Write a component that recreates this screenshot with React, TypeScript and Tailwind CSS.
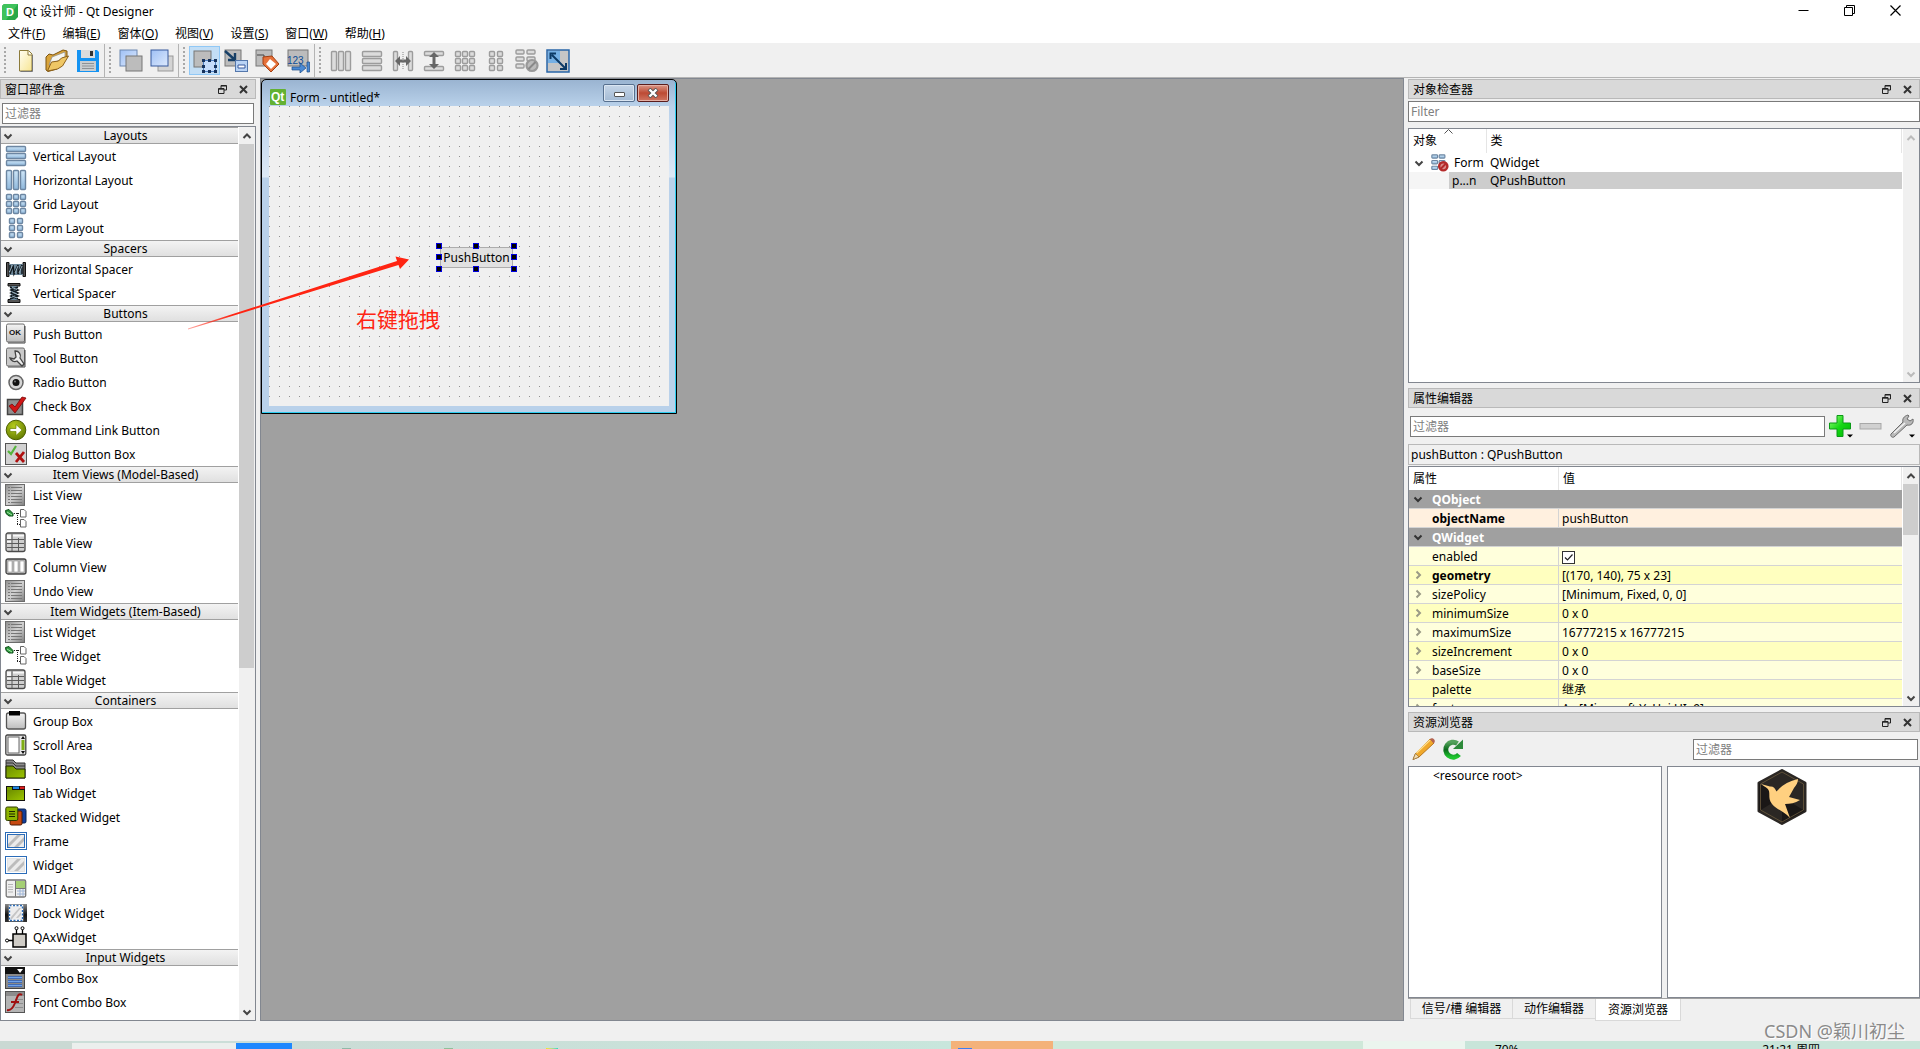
import React from "react";

type IconProps = { children: React.ReactNode; size?: string };

function Icon({ children, size = "h-[22px] w-[22px]" }: IconProps) {
  return (
    <svg viewBox="0 0 22 22" className={`${size} shrink-0`} aria-hidden="true">
      {children}
    </svg>
  );
}

function Defs() {
  return (
    <svg className="absolute h-0 w-0" aria-hidden="true">
      <defs>
        <linearGradient id="blue" x1="0" y1="0" x2="0" y2="1">
          <stop offset="0" stopColor="#cfe6f8" />
          <stop offset="1" stopColor="#8fb8dc" />
        </linearGradient>
        <linearGradient id="silver" x1="0" y1="0" x2="0" y2="1">
          <stop offset="0" stopColor="#f4f4f4" />
          <stop offset="1" stopColor="#bdbdbd" />
        </linearGradient>
        <linearGradient id="lines" x1="0" y1="0" x2="1" y2="1">
          <stop offset="0" stopColor="#8d8d8d" />
          <stop offset="0.5" stopColor="#d2d2d2" />
          <stop offset="1" stopColor="#7d7d7d" />
        </linearGradient>
        <linearGradient id="olive" x1="0" y1="0" x2="1" y2="1">
          <stop offset="0" stopColor="#6b8c00" />
          <stop offset="1" stopColor="#9cc400" />
        </linearGradient>
        <linearGradient id="page" x1="0" y1="0" x2="1" y2="1">
          <stop offset="0" stopColor="#fffef2" />
          <stop offset="1" stopColor="#f7e592" />
        </linearGradient>
        <linearGradient id="sheet" x1="0" y1="0" x2="1" y2="1">
          <stop offset="0" stopColor="#9fc0f5" />
          <stop offset="1" stopColor="#dce9fd" />
        </linearGradient>
        <linearGradient id="dark" x1="0" y1="0" x2="0" y2="1">
          <stop offset="0" stopColor="#8a8a8a" />
          <stop offset="0.6" stopColor="#111" />
          <stop offset="1" stopColor="#333" />
        </linearGradient>
        <radialGradient id="lime" cx="0.4" cy="0.3" r="0.8">
          <stop offset="0" stopColor="#b5cc1c" />
          <stop offset="1" stopColor="#5c7400" />
        </radialGradient>
        <linearGradient id="plus" x1="0" y1="0" x2="1" y2="1">
          <stop offset="0" stopColor="#9dff7c" />
          <stop offset="0.5" stopColor="#15d815" />
          <stop offset="1" stopColor="#00b400" />
        </linearGradient>
        <linearGradient id="reload" x1="0" y1="0" x2="0" y2="1">
          <stop offset="0" stopColor="#55a25c" />
          <stop offset="0.5" stopColor="#0a6b1c" />
          <stop offset="1" stopColor="#1fc62f" />
        </linearGradient>
      </defs>
    </svg>
  );
}

type Cell = [number, number, number, number];

function Cells({ cells, fill, stroke }: { cells: Cell[]; fill: string; stroke: string }) {
  return (
    <>
      {cells.map(([x, y, w, h]) => (
        <rect key={`${x}-${y}`} x={x} y={y} width={w} height={h} rx="1" fill={fill} stroke={stroke} strokeWidth="1.4" />
      ))}
    </>
  );
}

const rowsCells: Cell[] = [[1.5, 1.5, 19, 5], [1.5, 8.5, 19, 5], [1.5, 15.5, 19, 5]];
const colsCells: Cell[] = [[1.5, 1.5, 5, 19], [8.5, 1.5, 5, 19], [15.5, 1.5, 5, 19]];
const gridCells: Cell[] = [1.5, 8.5, 15.5].flatMap((y) => [1.5, 8.5, 15.5].map((x): Cell => [x, y, 5, 5]));
const formCells: Cell[] = [1.5, 8.5, 15.5].flatMap((y) => [4.5, 12.5].map((x): Cell => [x, y, 5, 5]));
const blueInk = { fill: "url(#blue)", stroke: "#6c86a2" };
const greyInk = { fill: "#dcdcdc", stroke: "#9c9c9c" };

const listIcon = (
  <Icon>
    <rect x="0.5" y="0.5" width="19" height="21" fill="url(#lines)" stroke="#6b6b6b" />
    {[3, 6, 9, 12, 15, 18].map((y) => (
      <path key={y} d={`M3 ${y + 0.5}h2M6 ${y + 0.5}h11`} stroke="#777" />
    ))}
  </Icon>
);

const treeIcon = (
  <Icon>
    <path d="M0.5 2.5L4 1.5L8 5.5L8 8L4 8L1 5.5Z" fill="#2f9a3e" stroke="#0b4a16" />
    <path d="M2 4l5 3" stroke="#a5e6a5" />
    <path d="M9 5.5h6M12.5 5v12M12 16.500h4" stroke="#222" strokeDasharray="1 1" />
    <path d="M15.500 1.500h3.500l2 2v5.500h-5.500zM15.500 11.500h3.500l2 2v5.500h-5.500z" fill="#fff" stroke="#666" />
  </Icon>
);

const tableIcon = (
  <Icon>
    <rect x="1" y="1" width="19" height="18.500" rx="2" fill="#cfcfcf" stroke="#4b4b4b" strokeWidth="1.3" />
    <path d="M2 3h4v4h-4zM8 3h11v1.500h-11zM2 9h4v1.500h-4z" fill="#f7f7f7" />
    <path d="M2 7.500h17M2 11.500h17M2 15.500h17M7 2v17M13.500 6v13" stroke="#5b5b5b" fill="none" />
  </Icon>
);

const hatch = (inner: boolean) => (
  <Icon>
    <rect x="0.500" y="2.500" width="21" height="17" fill="#fff" stroke="#2b6cb8" />
    <rect x="2.500" y="4.500" width="17" height="13" fill="#ebebeb" stroke={inner ? "#2b6cb8" : "#e2e2e2"} />
    <path d="M3 14l9-9h4L4 17h-1zM9 17l10-10v4l-6 6z" fill="#bcbcbc" />
  </Icon>
);

const icons: Record<string, React.ReactNode> = {
  "Vertical Layout": <Icon><Cells cells={rowsCells} {...blueInk} /></Icon>,
  "Horizontal Layout": <Icon><Cells cells={colsCells} {...blueInk} /></Icon>,
  "Grid Layout": <Icon><Cells cells={gridCells} {...blueInk} /></Icon>,
  "Form Layout": <Icon><Cells cells={formCells} {...blueInk} /></Icon>,
  "Horizontal Spacer": (
    <Icon>
      <path d="M1.500 4.500h2.500v14h-2.500zM18 4.500h2.500v14h-2.500z" fill="#555" stroke="#111" />
      <path d="M4 6h14v11h-14z" fill="#6c8799" />
      <path d="M5 16l3-9 1 9 4-9 0 9 4-9 0 9M5 7v6" fill="none" stroke="#10181e" strokeWidth="1.500" />
      <path d="M4.500 14l3-7M10 15l3-7M14 15l3-7" stroke="#bcd6e6" strokeWidth="0.800" />
    </Icon>
  ),
  "Vertical Spacer": (
    <Icon>
      <path d="M3 1.500h12v2.500h-12zM3 17.500h12v3h-12z" fill="#555" stroke="#111" />
      <path d="M5 4h8l-1 7 1 7h-8l1-7z" fill="#6c8799" />
      <path d="M5 5l8 3-7 3 7 3-8 3M13 5l-7 3 7 3-7 3 7 3" fill="none" stroke="#10181e" strokeWidth="1.500" />
      <path d="M7 5.500l5 2M7 10l5 2M7 14l5 2" stroke="#bcd6e6" strokeWidth="0.800" />
    </Icon>
  ),
  "Push Button": (
    <Icon>
      <rect x="1.500" y="1" width="18" height="18" rx="1.500" fill="url(#silver)" stroke="#6e6e6e" />
      <path d="M20 3v17h-17" fill="none" stroke="#444" />
      <text x="4" y="12" fontSize="8" fontWeight="bold" fontFamily="Liberation Sans" fill="#111">OK</text>
    </Icon>
  ),
  "Tool Button": (
    <Icon>
      <rect x="1.500" y="1" width="18" height="18" rx="1.500" fill="#c9c9c9" stroke="#6e6e6e" />
      <path d="M20 3v17h-17" fill="none" stroke="#444" />
      <path d="M10 4a5 5 0 0 1 5 7l4 6-2 2-5-5a5 5 0 0 1-7-3l4 1 2-2z" fill="#eee" stroke="#444" strokeWidth="1.300" />
    </Icon>
  ),
  "Radio Button": (
    <Icon>
      <circle cx="11" cy="11.500" r="7" fill="#d6d6d6" stroke="#666" strokeWidth="1.500" />
      <circle cx="11" cy="11.500" r="3.500" fill="#111" />
      <circle cx="10" cy="10.500" r="1" fill="#777" />
    </Icon>
  ),
  "Check Box": (
    <Icon>
      <rect x="2.500" y="4.500" width="15" height="15" fill="#8f8f8f" stroke="#444" strokeWidth="1.500" />
      <path d="M4 11l3-2 3 3 7-10 4 1-11 15z" fill="#d01616" stroke="#7a0808" strokeWidth="0.800" />
    </Icon>
  ),
  "Command Link Button": (
    <Icon>
      <circle cx="11" cy="11" r="9.800" fill="url(#lime)" stroke="#4d6000" />
      <path d="M5 9.500h6v-4l6 5.500-6 5.500v-4h-6z" fill="#fff" stroke="#6c8200" strokeWidth="0.700" />
    </Icon>
  ),
  "Dialog Button Box": (
    <Icon>
      <rect x="0.500" y="0.500" width="21" height="21" fill="#d2d2d2" stroke="#555" />
      <path d="M3 8l3 3 5-8" fill="none" stroke="#55b43c" strokeWidth="2.200" />
      <path d="M11 10l8 9M19 9l-8 10" stroke="#b01010" strokeWidth="2.800" />
    </Icon>
  ),
  "List View": listIcon,
  "Tree View": treeIcon,
  "Table View": tableIcon,
  "Column View": (
    <Icon>
      <rect x="1" y="3" width="20" height="15" rx="2" fill="#b5b5b5" stroke="#444" strokeWidth="1.300" />
      <path d="M3 5h4v11h-4zM9 5h4v11h-4zM15 5h4v11h-4z" fill="#fff" stroke="#999" strokeWidth="0.600" />
    </Icon>
  ),
  "Undo View": listIcon,
  "List Widget": listIcon,
  "Tree Widget": treeIcon,
  "Table Widget": tableIcon,
  "Group Box": (
    <Icon>
      <rect x="1.500" y="3" width="19" height="16" rx="2" fill="url(#silver)" stroke="#555" strokeWidth="1.300" />
      <rect x="4" y="1" width="11" height="4.500" fill="#000" />
    </Icon>
  ),
  "Scroll Area": (
    <Icon>
      <rect x="0.800" y="1" width="20" height="20" rx="1.500" fill="#e5e5e5" stroke="#444" strokeWidth="1.300" />
      <rect x="3" y="3" width="11" height="16" fill="#fff" stroke="#666" />
      <rect x="16.500" y="6" width="3" height="10" fill="#7fae12" />
      <path d="M16 5l2-3 2 3zM16 17l2 3 2-3z" fill="#111" />
    </Icon>
  ),
  "Tool Box": (
    <Icon>
      <path d="M1 2h7l3 3h9v15h-19z" fill="#8d8d8d" stroke="#333" />
      <path d="M1 5h7l3 3h9" fill="none" stroke="#333" />
      <path d="M1 8h7l3 3h9v9h-19z" fill="url(#olive)" stroke="#1d2600" />
    </Icon>
  ),
  "Tab Widget": (
    <Icon>
      <rect x="1" y="4" width="19" height="15" fill="#111" />
      <rect x="2" y="5" width="5" height="3" fill="#7ca200" />
      <rect x="8" y="4.500" width="6" height="2.500" fill="#1e83e0" />
      <rect x="15" y="4.500" width="4.500" height="2.500" fill="#d81c1c" />
      <rect x="2" y="8" width="17" height="10" fill="url(#olive)" />
    </Icon>
  ),
  "Stacked Widget": (
    <Icon>
      <rect x="9" y="3" width="12" height="14" rx="1.500" fill="#123f9c" stroke="#08204f" />
      <rect x="5" y="5" width="12" height="14" rx="1.500" fill="#c64a12" stroke="#4f1b04" />
      <rect x="0.800" y="1" width="12" height="13.500" rx="1.500" fill="#8db300" stroke="#2c3a00" />
      <path d="M4 5.500h6M4 8h6M4 10.500h6" stroke="#1d2600" />
    </Icon>
  ),
  Frame: hatch(true),
  Widget: hatch(false),
  "MDI Area": (
    <Icon>
      <rect x="1.200" y="2" width="19.500" height="17" rx="1.500" fill="#efefef" stroke="#777" strokeWidth="1.300" />
      <rect x="11" y="3" width="9" height="7" fill="#a5cf74" />
      <path d="M3 6.500h5M3 9h5M3 11.500h5M3 14h5" stroke="#b5b5b5" />
      <path d="M10.500 2.500v16M10.500 10.500h10" stroke="#777" />
      <path d="M12 13h8M12 16h8M15 11v7M18 11v7" stroke="#9db4d6" />
    </Icon>
  ),
  "Dock Widget": (
    <Icon>
      <rect x="0" y="2" width="22" height="18" fill="url(#dark)" />
      <rect x="4.500" y="3.500" width="13" height="15" fill="#ededed" />
      <rect x="4.500" y="3.500" width="13" height="15" fill="none" stroke="#fff" strokeWidth="1.400" />
      <rect x="4.500" y="3.500" width="13" height="15" fill="none" stroke="#2b6cb8" strokeWidth="1.400" strokeDasharray="2 1.500" />
      <path d="M6 15l8-9h2l-9 11h-1zM11 16l5-6v3l-3 3z" fill="#c5c5c5" />
    </Icon>
  ),
  QAxWidget: (
    <Icon>
      <rect x="8" y="8" width="13" height="13" fill="#cfccc6" stroke="#000" strokeWidth="1.500" />
      <path d="M11.500 8V3M17.500 8V3M8 14.500H3" stroke="#000" strokeWidth="1.300" />
      <circle cx="11.500" cy="2.200" r="1.500" fill="#fff" stroke="#000" />
      <circle cx="17.500" cy="2.200" r="1.500" fill="#fff" stroke="#000" />
      <circle cx="2" cy="14.500" r="1.500" fill="#fff" stroke="#000" />
    </Icon>
  ),
  "Combo Box": (
    <Icon>
      <rect x="0.500" y="0.500" width="19" height="21" fill="#8a8a8a" stroke="#444" />
      <rect x="0" y="0" width="20" height="7" fill="#111" />
      <path d="M12 2h6l-3 4z" fill="#fff" />
      <path d="M3 10.500h14M3 14.500h14M3 18.500h14" stroke="#36599c" strokeWidth="3" />
      <path d="M3 10.500h14M3 14.500h14M3 18.500h14" stroke="#6fa3ea" strokeWidth="1.600" />
    </Icon>
  ),
  "Font Combo Box": (
    <Icon>
      <rect x="0.500" y="0.500" width="19" height="21" fill="#b4b4b4" stroke="#555" />
      <rect x="1" y="1" width="18" height="4" fill="#8c8c8c" />
      <path d="M10 8.500h8M10 12.500h8M10 16.500h8" stroke="#8d8d8d" />
      <path d="M17 4C13 1 12 7 10 12S6 20 2 19M6 11h8" fill="none" stroke="#a01010" strokeWidth="2" />
    </Icon>
  ),
};

const groups: { title: string; items: string[] }[] = [
  { title: "Layouts", items: ["Vertical Layout", "Horizontal Layout", "Grid Layout", "Form Layout"] },
  { title: "Spacers", items: ["Horizontal Spacer", "Vertical Spacer"] },
  { title: "Buttons", items: ["Push Button", "Tool Button", "Radio Button", "Check Box", "Command Link Button", "Dialog Button Box"] },
  { title: "Item Views (Model-Based)", items: ["List View", "Tree View", "Table View", "Column View", "Undo View"] },
  { title: "Item Widgets (Item-Based)", items: ["List Widget", "Tree Widget", "Table Widget"] },
  {
    title: "Containers",
    items: ["Group Box", "Scroll Area", "Tool Box", "Tab Widget", "Stacked Widget", "Frame", "Widget", "MDI Area", "Dock Widget", "QAxWidget"],
  },
  { title: "Input Widgets", items: ["Combo Box", "Font Combo Box"] },
];

function Chevron({ dir, color = "#444" }: { dir: "up" | "down" | "right"; color?: string }) {
  const d = dir === "up" ? "M1.500 7l3.500-3.500L8.500 7" : dir === "down" ? "M1.500 3.500L5 7l3.500-3.500" : "M3.500 1.500L7 5l-3.500 3.500";
  return (
    <svg viewBox="0 0 10 10" className="h-[10px] w-[10px] shrink-0" aria-hidden="true">
      <path d={d} fill="none" stroke={color} strokeWidth="2" />
    </svg>
  );
}

function ScrollBar({ thumb, color }: { thumb?: string; color?: string }) {
  return (
    <div className="ml-px flex w-[16px] shrink-0 flex-col bg-[#f0f0f0]">
      <button aria-label="Scroll up" className="flex h-[17px] shrink-0 items-center justify-center"><Chevron dir="up" color={color} /></button>
      <div className="min-h-0 flex-1">{thumb && <div className={`${thumb} mr-px bg-[#cdcdcd]`} />}</div>
      <button aria-label="Scroll down" className="flex h-[17px] shrink-0 items-center justify-center"><Chevron dir="down" color={color} /></button>
    </div>
  );
}

function DockTitle({ title }: { title: string }) {
  return (
    <div className="flex h-[20px] shrink-0 items-center border border-[#b9b9b9] bg-[#d9d9d9] pt-px pr-[7px] pl-[4px]">
      <h2 className="flex-1 leading-[17px]">{title}</h2>
      <button aria-label={`浮动 ${title}`} className="mr-[12px]">
        <svg viewBox="0 0 9 9" className="h-[9px] w-[9px]" fill="none" stroke="#222">
          <path d="M3 3.500V0.500h5.500v4.500H6M3 1h5.500M0.500 3.500h5.500v5h-5.500zM0.500 4.200h5.500" />
        </svg>
      </button>
      <button aria-label={`关闭 ${title}`}>
        <svg viewBox="0 0 9 9" className="h-[9px] w-[9px]" stroke="#333" strokeWidth="2">
          <path d="M1 1l7 7M8 1l-7 7" />
        </svg>
      </button>
    </div>
  );
}

function Filter({ label, hint, className }: { label: string; hint: string; className: string }) {
  return (
    <input
      type="text"
      aria-label={label}
      placeholder={hint}
      className={`${className} h-[21px] min-w-0 border border-[#7a7a7a] bg-white px-[2px] placeholder:text-[#808080]`}
    />
  );
}

function ToolGroup({ children, last }: { children: React.ReactNode; last?: boolean }) {
  return (
    <div className={`flex h-full items-center pr-px ${last ? "" : "border-r border-[#b4b4b4]"}`}>
      <div className="ml-[4px] h-[27px] w-[6px] bg-[radial-gradient(circle_at_1px_1px,#a8a8a8_1px,transparent_1.500px)] bg-[length:7px_4px]" />
      {children}
    </div>
  );
}

function Tool({ label, active, children }: { label: string; active?: boolean; children: React.ReactNode }) {
  return (
    <button
      aria-label={label}
      aria-pressed={active}
      className={`flex h-[29px] w-[31px] items-center justify-center border ${active ? "border-[#90c8f6] bg-[#c3def5]" : "border-transparent"}`}
    >
      <svg viewBox="0 0 24 24" className="h-[24px] w-[24px]">{children}</svg>
    </button>
  );
}

const shade = { fill: "#bcbcbc", stroke: "#777" };

function ToolBar() {
  return (
    <div role="toolbar" aria-label="工具" className="flex h-[34px] shrink-0 items-center border-b border-[#b4b4b4] bg-[#f0f0f0]">
      <ToolGroup>
        <Tool label="新建">
          <path d="M5.500 1.500h9l3.500 3.500v16l-1 1h-11.500z" fill="url(#page)" stroke="#8c7b3a" />
          <path d="M14 2v4h4" fill="#fff" stroke="#8c7b3a" />
          <path d="M18.500 6v16.500h-12" fill="none" stroke="#777" />
        </Tool>
        <Tool label="打开">
          <path d="M1 21V8l3-3 4 1L18 1l4 1v6L12 20l-9 2.500z" fill="#d9a43a" stroke="#7d5410" />
          <path d="M4 16l3-8L20 3v5L9 14z" fill="#f5f5f0" stroke="#888" strokeWidth="0.700" />
          <path d="M2.500 22l4-9 7-1 3-3 7-2-6 10-5 3z" fill="#efc765" stroke="#8d611a" />
        </Tool>
        <Tool label="保存">
          <path d="M1 1h20l2 2v20h-22z" fill="#1493f2" />
          <path d="M5 1h14v8h-14z" fill="#dcdcdc" />
          <path d="M14 2h3v5h-3z" fill="#333" />
          <path d="M4 12h16v10h-16z" fill="#c9cdd0" />
          <path d="M6 14.500h12M6 17h12M6 19.500h12" stroke="#8d9296" />
        </Tool>
      </ToolGroup>
      <ToolGroup>
        <Tool label="置于底层">
          <rect x="1" y="1" width="17" height="16" fill="url(#sheet)" stroke="#6c87b0" />
          <rect x="7" y="7" width="16" height="15" {...shade} />
        </Tool>
        <Tool label="置于顶层">
          <rect x="8" y="7" width="15" height="15" fill="#d4d4d4" stroke="#999" />
          <rect x="1" y="1" width="17" height="16" fill="url(#sheet)" stroke="#36599c" />
        </Tool>
      </ToolGroup>
      <ToolGroup>
        <Tool label="编辑控件" active>
          <rect x="1" y="2" width="17" height="16" {...shade} />
          <rect x="10.500" y="11.500" width="12" height="11" fill="#c5dcfa" stroke="#4f7fc0" />
          <path d="M9 10h3v3h-3zM15 10h3v3h-3zM21 10h3v3h-3zM9 16h3v3h-3zM21 16h3v3h-3zM9 21h3v3h-3zM15 21h3v3h-3zM21 21h3v3h-3z" fill="#16325c" />
        </Tool>
        <Tool label="编辑信号/槽">
          <rect x="1" y="1" width="16" height="16" {...shade} />
          <path d="M1 2l9 8M4 11h7V4" fill="none" stroke="#173f66" strokeWidth="2.400" />
          <rect x="11.500" y="11.500" width="12" height="11" fill="#b9d3f5" stroke="#5477ab" />
          <path d="M14 16h7v3h-7z" fill="#fff" stroke="#36599c" />
        </Tool>
        <Tool label="编辑伙伴">
          <rect x="1" y="1" width="16" height="16" {...shade} />
          <path d="M2 6h7v4" fill="none" stroke="#444" />
          <path d="M8 8l9-1 7 8-8 8-8-8z" fill="#e5713a" stroke="#a33f12" />
          <path d="M15 10l6 5-5 5-5-5z" fill="#fff" />
        </Tool>
        <Tool label="编辑 Tab 顺序">
          <rect x="2" y="1" width="20" height="16" {...shade} />
          <text x="1" y="15" fontSize="10" fontFamily="Liberation Sans" fill="#0c4c96">123</text>
          <path d="M6 18h8v-4l6 5-6 5v-3H6zM21 13h2.500v10H21z" fill="#4a8ad4" stroke="#1b4a86" strokeWidth="0.700" />
        </Tool>
      </ToolGroup>
      <ToolGroup last>
        <Tool label="水平布局"><g transform="translate(1 1)"><Cells cells={colsCells} {...greyInk} /></g></Tool>
        <Tool label="垂直布局"><g transform="translate(1 1)"><Cells cells={rowsCells} {...greyInk} /></g></Tool>
        <Tool label="使用分裂器水平布局">
          <Cells cells={[[2.5, 2.5, 4, 19], [17.5, 2.5, 4, 19]]} {...greyInk} />
          <path d="M4 12l5-5v3.500h6V7l5 5-5 5v-3.500H9V17z" fill="#666" />
          <path d="M12 3v18" stroke="#888" strokeDasharray="1 1" />
        </Tool>
        <Tool label="使用分裂器垂直布局">
          <Cells cells={[[2.5, 2.5, 19, 4], [2.5, 17.5, 19, 4]]} {...greyInk} />
          <path d="M12 3l5 5h-3.500v7H17l-5 5-5-5h3.500V8H7z" fill="#666" />
        </Tool>
        <Tool label="栅格布局"><g transform="translate(1 1)"><Cells cells={gridCells} {...greyInk} /></g></Tool>
        <Tool label="在窗体布局中布局"><g transform="translate(1 1)"><Cells cells={formCells} {...greyInk} /></g></Tool>
        <Tool label="打破布局">
          <Cells cells={[[1, 1, 8, 4], [12, 1, 8, 4], [1, 8, 8, 4], [12, 8, 8, 4], [1, 15, 8, 4]]} {...greyInk} />
          <circle cx="17" cy="16.500" r="5.500" fill="#bbb" stroke="#999" strokeWidth="2.200" />
          <path d="M13.500 20l7-7" stroke="#888" strokeWidth="2" />
        </Tool>
        <Tool label="调整大小">
          <rect x="1" y="1" width="22" height="22" fill="#c6c6c6" stroke="#2866a8" strokeWidth="1.500" />
          <path d="M2 2h12v12h-12z" fill="#76b0e4" />
          <path d="M6 6l13 13M4.500 10V4.500H10M20 14v6h-6" fill="none" stroke="#0d3a66" strokeWidth="2" />
        </Tool>
      </ToolGroup>
    </div>
  );
}

const menus: [string, string][] = [["文件", "F"], ["编辑", "E"], ["窗体", "O"], ["视图", "V"], ["设置", "S"], ["窗口", "W"], ["帮助", "H"]];

function WidgetBox() {
  return (
    <aside className="flex w-[256px] shrink-0 flex-col pt-px">
      <DockTitle title="窗口部件盒" />
      <Filter label="过滤窗口部件" hint="过滤器" className="mx-[2px] mt-[4px] shrink-0" />
      <div className="mt-[2px] flex min-h-0 flex-1 border border-[#828790] bg-white">
        <div className="min-w-0 flex-1 overflow-hidden">
          {groups.map((g) => (
            <section key={g.title}>
              <h3 className="flex h-[17px] items-center border-y border-[#a0a0a0] bg-linear-to-b from-[#f3f3f3] to-[#e0e0e0] pl-[2px]">
                <Chevron dir="down" />
                <span className="flex-1 text-center leading-[15px]">{g.title}</span>
              </h3>
              <ul>
                {g.items.map((name) => (
                  <li key={name} className="flex h-[24px] items-center gap-[6px] pl-[4px]">
                    {icons[name]}
                    <span className="pt-[2px]">{name}</span>
                  </li>
                ))}
              </ul>
            </section>
          ))}
        </div>
        <ScrollBar thumb="h-[61%]" />
      </div>
    </aside>
  );
}

const handles = [
  "-left-[3px] -top-[3px]", "left-[34px] -top-[3px]", "-right-[3px] -top-[3px]",
  "-left-[3px] top-[8px]", "-right-[3px] top-[8px]",
  "-left-[3px] -bottom-[3px]", "left-[34px] -bottom-[3px]", "-right-[3px] -bottom-[3px]",
];

function Workspace() {
  return (
    <main className="relative min-w-0 flex-1 overflow-hidden border border-[#828790] bg-[#a0a0a0]">
      <div className="absolute top-0 left-0 rounded-t-[5px] border border-black bg-[linear-gradient(#9ab4d1,#b9d1ea_26px,#c4d8ef_50px,#dde9f6_97px,#b9d1ea_98px)] px-[7px] pb-[7px] shadow-[inset_-1px_-1px_0_#2ccdf0]">
        <div className="flex h-[26px] items-center">
          <svg viewBox="0 0 16 16" className="mt-[8px] ml-px h-[16px] w-[16px]" aria-hidden="true">
            <rect width="16" height="16" rx="1" fill="#63b132" />
            <text x="1" y="12" fontSize="12" fontWeight="bold" fontFamily="Liberation Sans" fill="#fff">Qt</text>
          </svg>
          <span className="mt-[10px] ml-[4px] flex-1">Form - untitled*</span>
          <button aria-label="最小化" className="mr-[2px] flex h-[18px] w-[32px] items-center justify-center rounded-[2px] border border-[#57708f] bg-linear-to-b from-[#c6d6e8] to-[#a3bad4] shadow-[inset_0_0_0_1px_#dbe6f2]">
            <span className="mt-[3px] h-[5px] w-[11px] rounded-[1px] border border-[#555] bg-white" />
          </button>
          <button aria-label="关闭" className="flex h-[18px] w-[32px] items-center justify-center rounded-[2px] border border-[#5b1d1d] bg-linear-to-b from-[#d99688] via-[#bd4a34] to-[#cf7561] shadow-[inset_0_0_0_1px_#e5b0a5]">
            <svg viewBox="0 0 12 10" className="h-[10px] w-[12px]">
              <path d="M2 1l8 8M10 1L2 9" stroke="#555" strokeWidth="4" />
              <path d="M2.500 1.500l7 7M9.500 1.500l-7 7" stroke="#fff" strokeWidth="2.400" />
            </svg>
          </button>
        </div>
        <div className="relative h-[300px] w-[400px] bg-[#f0f0f0] bg-[linear-gradient(90deg,#f0f0f0_0_9px,transparent_9px),linear-gradient(#f0f0f0_0_9px,#909090_9px)] bg-[length:10px_10px] bg-[position:1px_1px]">
          <div className="absolute top-[140px] left-[170px] h-[23px] w-[75px] p-px">
            <button className="h-full w-full border border-[#adadad] bg-[#e1e1e1] leading-[19px]">PushButton</button>
            {handles.map((pos) => (
              <span key={pos} className={`absolute h-[6px] w-[6px] border border-[#0000e0] bg-black ${pos}`} />
            ))}
          </div>
        </div>
      </div>
    </main>
  );
}

function Annotation() {
  return (
    <div className="pointer-events-none absolute top-[250px] left-[186px]">
      <svg viewBox="0 0 226 82" className="h-[82px] w-[226px]" aria-hidden="true">
        <defs>
          <linearGradient id="tail" x1="0" y1="0" x2="1" y2="0">
            <stop offset="0" stopColor="#ff2412" stopOpacity="0.400" />
            <stop offset="0.200" stopColor="#ff2412" />
          </linearGradient>
        </defs>
        <path d="M2 78.500L211 11L209.500 6.500L223 9.500L214 19L212.500 15L2 79.500Z" fill="url(#tail)" />
      </svg>
      <p className="-mt-[28px] ml-[170px] text-[21px] leading-[30px] whitespace-nowrap text-[#ff2412]">右键拖拽</p>
    </div>
  );
}

function ObjectInspector() {
  return (
    <section className="flex min-h-0 flex-col">
      <DockTitle title="对象检查器" />
      <Filter label="过滤对象" hint="Filter" className="mt-[2px] shrink-0" />
      <div className="mt-[6px] flex min-h-0 flex-1 border border-[#828790] bg-white">
        <div className="min-w-0 flex-1">
          <table className="w-full table-fixed border-collapse text-left">
            <colgroup><col className="w-[77px]" /><col /></colgroup>
            <thead>
              <tr className="h-[24px]">
                <th className="relative border-r border-[#e5e5e5] pl-[4px] font-normal">
                  对象
                  <svg viewBox="0 0 9 5" className="absolute top-0 left-[35px] h-[5px] w-[9px]"><path d="M0.500 4.500l4-4 4 4" fill="none" stroke="#555" /></svg>
                </th>
                <th className="border-r border-[#e5e5e5] pl-[4px] font-normal">类</th>
              </tr>
            </thead>
            <tbody>
              <tr className="h-[19px]">
                <td className="p-0">
                  <div className="flex h-[19px] items-center pl-[5px]">
                    <Chevron dir="down" />
                    <span className="ml-[7px]">
                      <Icon size="h-[18px] w-[18px]">
                        <Cells cells={[[1, 1, 7, 4], [10, 1, 7, 4], [1, 8, 7, 4], [10, 8, 7, 4], [1, 15, 7, 4]]} {...blueInk} />
                        <circle cx="15" cy="15" r="5" fill="#d98c8c" stroke="#b42a2a" strokeWidth="3" />
                        <path d="M12 18l6-6" stroke="#b42a2a" strokeWidth="2.400" />
                      </Icon>
                    </span>
                    <span className="ml-[5px]">Form</span>
                  </div>
                </td>
                <td className="p-0 pl-[4px]">QWidget</td>
              </tr>
              <tr className="h-[17px] leading-[17px]">
                <td className="bg-[linear-gradient(90deg,#f5f5f5_40px,#cdcdcd_40px)] p-0 pl-[43px]">p...n</td>
                <td className="bg-[#cdcdcd] p-0 pl-[4px]">QPushButton</td>
              </tr>
            </tbody>
          </table>
        </div>
        <ScrollBar color="#bbb" />
      </div>
    </section>
  );
}

type Prop = { name: string; value?: string; bold?: boolean; open?: boolean; kind: string; check?: boolean; arrow?: boolean };

const groupRow = "bg-[#a0a0a0] text-white";
const light = "bg-[#ffffdc]";
const deep = "bg-[#ffffbf]";
const props: Prop[] = [
  { name: "QObject", bold: true, open: true, kind: groupRow },
  { name: "objectName", value: "pushButton", bold: true, kind: "bg-[#fff0df]" },
  { name: "QWidget", bold: true, open: true, kind: groupRow },
  { name: "enabled", check: true, kind: light },
  { name: "geometry", value: "[(170, 140), 75 x 23]", bold: true, arrow: true, kind: deep },
  { name: "sizePolicy", value: "[Minimum, Fixed, 0, 0]", arrow: true, kind: light },
  { name: "minimumSize", value: "0 x 0", arrow: true, kind: deep },
  { name: "maximumSize", value: "16777215 x 16777215", arrow: true, kind: light },
  { name: "sizeIncrement", value: "0 x 0", arrow: true, kind: deep },
  { name: "baseSize", value: "0 x 0", arrow: true, kind: light },
  { name: "palette", value: "继承", kind: deep },
  { name: "font", value: "A   [Microsoft YaHei UI, 9]", arrow: true, kind: light },
];

function PropertyEditor() {
  return (
    <section className="flex min-h-0 flex-col">
      <DockTitle title="属性编辑器" />
      <div className="flex h-[36px] shrink-0 items-center pl-[2px]">
        <Filter label="过滤属性" hint="过滤器" className="flex-1" />
        <button aria-label="添加动态属性" className="ml-[3px] w-[25px]">
          <svg viewBox="0 0 25 24" className="h-[24px] w-[25px]">
            <path d="M9 1.500h6V9h7.500v6H15v7.500H9V15H1.500V9H9z" fill="url(#plus)" stroke="#0a9a16" />
            <path d="M19 20.500h6l-3 3z" fill="#000" />
          </svg>
        </button>
        <button aria-label="删除动态属性" className="ml-[6px] w-[24px]">
          <svg viewBox="0 0 24 24" className="h-[24px] w-[24px]"><rect x="1" y="9.500" width="21" height="5.500" fill="#d0d0d0" stroke="#a8a8a8" /></svg>
        </button>
        <button aria-label="配置属性编辑器" className="mr-[5px] ml-[7px] w-[25px]">
          <svg viewBox="0 0 25 24" className="h-[24px] w-[25px]">
            <path d="M1 20L13 8c-1-3 1-6 5-7l1 1-2 3 3 2 3-2c1 4-2 7-6 6L4 23c-2 1-4-1-3-3z" fill="#b9b9b9" stroke="#6d6d6d" />
            <path d="M4 19l11-10" stroke="#f4f4f4" strokeWidth="1.500" />
            <path d="M19 20.500h6l-3 3z" fill="#000" />
          </svg>
        </button>
      </div>
      <p className="flex h-[21px] shrink-0 items-center border border-[#b9b9b9] px-[2px]">pushButton : QPushButton</p>
      <div className="mt-px flex min-h-0 flex-1 border border-[#828790] bg-white">
        <div className="min-w-0 flex-1 overflow-hidden">
          <table className="w-full table-fixed border-separate border-spacing-0 text-left">
            <colgroup><col className="w-[150px]" /><col /></colgroup>
            <thead>
              <tr className="h-[23px]">
                <th className="border-r border-[#e5e5e5] p-0 pt-px pl-[4px] font-normal">属性</th>
                <th className="border-r border-[#e5e5e5] p-0 pt-px pl-[4px] font-normal">值</th>
              </tr>
            </thead>
            <tbody>
              {props.map((p) => (
                <tr key={p.name} className={`h-[19px] ${p.kind}`}>
                  <th scope="row" className={`border-b border-[#d4d4d4] p-0 ${p.bold ? "font-bold" : "font-normal"} ${p.open ? "" : "border-r"}`} colSpan={p.open ? 2 : 1}>
                    <div className="flex h-[18px] items-center pl-[4px]">
                      <span className="w-[19px]">
                        {p.open && <Chevron dir="down" color="#333" />}
                        {p.arrow && <Chevron dir="right" color="#9b9b86" />}
                      </span>
                      <span className="pt-[2px]">{p.name}</span>
                    </div>
                  </th>
                  {!p.open && (
                    <td className="border-b border-[#d4d4d4] p-0 pl-[3px]">
                      <div className="flex h-[18px] items-center pt-[2px] whitespace-pre">
                        {p.check && (
                          <span className="relative h-[13px] w-[13px]">
                            <input type="checkbox" defaultChecked aria-label={p.name} className="block h-[13px] w-[13px] appearance-none border border-[#333] bg-white" />
                            <svg viewBox="0 0 13 13" className="pointer-events-none absolute inset-0"><path d="M3 6.500l2.500 2.500L10.500 3.500" fill="none" stroke="#222" strokeWidth="1.200" /></svg>
                          </span>
                        )}
                        {p.value}
                      </div>
                    </td>
                  )}
                </tr>
              ))}
            </tbody>
          </table>
        </div>
        <ScrollBar thumb="h-[51px]" />
      </div>
    </section>
  );
}

function ResourceBrowser() {
  return (
    <section className="flex min-h-0 flex-col">
      <DockTitle title="资源浏览器" />
      <div className="flex h-[34px] shrink-0 items-center pr-[2px] pl-[4px]">
        <button aria-label="编辑资源">
          <svg viewBox="0 0 24 24" className="h-[24px] w-[24px]">
            <path d="M1 22.500l2.500-6L18 2l4 4L7 20z" fill="#f0a92c" stroke="#b8741a" />
            <path d="M4.500 16L18 3" stroke="#ffdf8d" strokeWidth="1.500" />
            <path d="M1 22.500l2.500-6 3.500 3.500z" fill="#f3dcb0" stroke="#94733c" strokeWidth="0.700" />
            <path d="M18 2c1.500-2 6 0 4.500 3.500l-1 1z" fill="#b46452" />
          </svg>
        </button>
        <button aria-label="重新加载" className="ml-[5px]">
          <svg viewBox="0 0 24 24" className="h-[24px] w-[24px]">
            <path d="M18 17.500A7.500 7.500 0 1 1 16.500 6.500" fill="none" stroke="url(#reload)" strokeWidth="5" />
            <path d="M22 2.500v9.500h-10z" fill="#2d8a3a" />
          </svg>
        </button>
        <div className="flex-1" />
        <Filter label="过滤资源" hint="过滤器" className="w-[225px]" />
      </div>
      <div className="grid min-h-0 flex-1 grid-cols-2 gap-[5px]">
        <div className="border border-[#828790] bg-white pt-px pl-[24px]">&lt;resource root&gt;</div>
        <div className="border border-[#828790] bg-white pt-[2px] pl-[89px]">
          <svg viewBox="0 0 50 56" className="h-[56px] w-[50px]" role="img" aria-label="Bird">
            <path d="M25 1.500L48 14v28L25 54.500 2 42V14z" fill="#2b2724" stroke="#2b2724" strokeWidth="3" strokeLinejoin="round" />
            <path d="M25 28L2 14v28zM25 28l23 14-23 12z" fill="#1a1716" />
            <path d="M25 3L46.500 15v26L25 53 3.500 41V15z" fill="none" stroke="#6b5b3e" strokeWidth="0.800" />
            <path d="M4 15l9 2.500c3-.5 5 1.500 6.500 5C25 16 32 12 41 10c0 4-2 6-4 9l-5 9 11 3c-5 3-10 4-15 4l5 14C27 42 20 41 15 35c-4-5-2-9-3-13-1-3-4-4-8-7z" fill="#ffd080" />
          </svg>
        </div>
      </div>
      <div role="tablist" className="flex h-[23px] shrink-0 items-start border-t border-[#a0a0a0] pl-[2px]">
        <button role="tab" className="h-[20px] w-[103px] border border-t-0 border-[#d9d9d9]">信号/槽 编辑器</button>
        <button role="tab" className="h-[20px] w-[82px] border-b border-[#d9d9d9]">动作编辑器</button>
        <button role="tab" aria-selected="true" className="h-[22px] w-[86px] border border-t-0 border-[#d9d9d9] bg-white">资源浏览器</button>
      </div>
    </section>
  );
}

export default function App() {
  return (
    <div className="relative flex h-screen flex-col overflow-hidden bg-[#f0f0f0] font-['Noto_Sans','Noto_Sans_CJK_SC',sans-serif] text-[12px] leading-[16px] text-black">
      <Defs />
      <header className="flex h-[24px] shrink-0 items-center bg-white pl-[2px]">
        <svg viewBox="0 0 16 16" className="h-[16px] w-[16px]" aria-hidden="true">
          <path d="M2 0h14v13l-3 3H0V2z" fill="#27a846" />
          <path d="M0 2l2-2h14L4 16H0z" fill="#3fc25c" />
          <text x="4" y="12" fontSize="11" fontWeight="bold" fontFamily="Liberation Sans" fill="#fff">D</text>
        </svg>
        <h1 className="ml-[5px] flex-1">Qt 设计师 - Qt Designer</h1>
        <div className="flex items-center gap-[35px] pr-[19px] pb-[4px]">
          <button aria-label="最小化"><svg viewBox="0 0 11 11" className="h-[11px] w-[11px]"><path d="M0.500 5.500h10" stroke="#000" /></svg></button>
          <button aria-label="还原"><svg viewBox="0 0 11 11" className="h-[11px] w-[11px]" fill="none" stroke="#000"><path d="M2.500 2.500v-2h8v8h-2M0.500 2.500h8v8h-8z" /></svg></button>
          <button aria-label="关闭"><svg viewBox="0 0 11 11" className="h-[11px] w-[11px]"><path d="M0.500 0.500l10 10M10.500 0.500l-10 10" stroke="#000" strokeWidth="1.200" /></svg></button>
        </div>
      </header>
      <nav aria-label="菜单" className="flex h-[20px] shrink-0 items-center gap-[17px] border-b border-[#f0f0f0] bg-white pl-[8px]">
        {menus.map(([name, key]) => (
          <button key={name}>{name}(<u>{key}</u>)</button>
        ))}
      </nav>
      <ToolBar />
      <div className="flex min-h-0 flex-1 gap-[4px]">
        <WidgetBox />
        <Workspace />
        <div className="grid w-[512px] shrink-0 grid-rows-[304fr_319fr_309fr] gap-[5px] pt-px">
          <ObjectInspector />
          <PropertyEditor />
          <ResourceBrowser />
        </div>
      </div>
      <Annotation />
      <footer className="flex h-[20px] shrink-0 items-center justify-end pr-[15px]">
        <span className="text-[18px] leading-[20px] text-[#8a8a8a] [text-shadow:1px_1px_0_#fff]">CSDN @颖川初尘</span>
      </footer>
      <div className="flex h-[8px] shrink-0 overflow-hidden bg-[#cbded8]">
        <div className="w-[72px] bg-[#cad9d3]" />
        <div className="mt-[2px] w-[164px] bg-[#ebefed]" />
        <div className="mt-[2px] w-[56px] bg-[#1e88fe]" />
        <div className="flex flex-1 items-end gap-[93px] bg-linear-to-r from-[#cbdcd6] to-[#c8e6dc] pl-[50px]">
          <div className="h-px w-[9px] bg-[#8fb8a8]" />
          <div className="h-px w-[9px] bg-[#8fbf9a]" />
          <div className="h-px w-[12px] bg-linear-to-r from-[#ffe000] to-[#10d8c8]" />
        </div>
        <div className="w-[102px] bg-[#f4b27a] pt-[7px] pl-[7px]"><div className="h-px w-[14px] bg-[#3d7ff0]" /></div>
        <div className="w-[310px] bg-[#cfe8d9]" />
        <div className="w-[102px] bg-[#ebf5ee]" />
        <div className="flex w-[455px] justify-between bg-[#c8e5d9] pt-px pr-[100px] pl-[30px] leading-[16px]"><span>70%</span><span>21:21 周四</span></div>
      </div>
    </div>
  );
}
